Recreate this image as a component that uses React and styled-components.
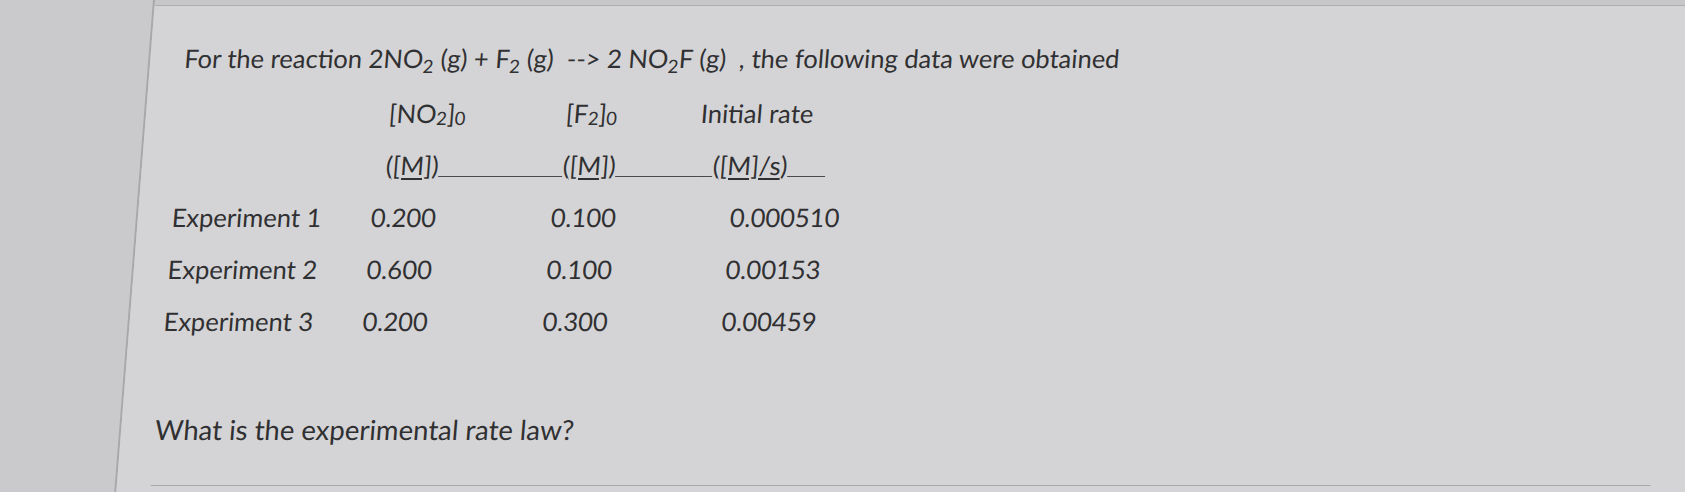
import React from 'react'
import styled, { createGlobalStyle } from 'styled-components'

const rows = [
	{ label: 'Experiment 1', no2: '0.200', f2: '0.100', rate: '0.000510' },
	{ label: 'Experiment 2', no2: '0.600', f2: '0.100', rate: '0.00153' },
	{ label: 'Experiment 3', no2: '0.200', f2: '0.300', rate: '0.00459' },
]

const App = () => {
	return (
		<>
			<GlobalStyle />
			<Page>
				<Gutter />
				<Panel>
					<Question>
						<Title>
							For the reaction 2NO<Sub>2</Sub> (g) + F<Sub>2</Sub> (g)&nbsp; --&gt; 2 NO<Sub>2</Sub>F (g)&nbsp; , the following data were obtained
						</Title>
						<Table>
							<Cell />
							<Cell indent={10}>[NO<Sub>2</Sub>]<Sub>0</Sub></Cell>
							<Cell indent={7}>[F<Sub>2</Sub>]<Sub>0</Sub></Cell>
							<Cell>Initial rate</Cell>

							<Cell />
							<Cell indent={11}>
								(<Unit>[M]</Unit>)<Rule />
							</Cell>
							<Cell>
								<Rule fixed={8} />(<Unit>[M]</Unit>)<Rule />
							</Cell>
							<Cell>
								<Rule fixed={16} />(<Unit>[M]/s</Unit>)<Rule fixed={38} />
							</Cell>

							{rows.map((row) => (
								<React.Fragment key={row.label}>
									<Cell>{row.label}</Cell>
									<Cell>{row.no2}</Cell>
									<Cell>{row.f2}</Cell>
									<Cell indent={37}>{row.rate}</Cell>
								</React.Fragment>
							))}
						</Table>
						<Prompt>What is the experimental rate law?</Prompt>
					</Question>
				</Panel>
			</Page>
		</>
	)
}

const GlobalStyle = createGlobalStyle`
	html, body {
		margin: 0;
		overflow: hidden;
		background: #d3d3d5;
	}
`

const Page = styled.div`
	display: flex;
	width: 1760px;
	height: 492px;
	background: #c7c7c9;
	transform: skewX(-4.5deg);
	transform-origin: 0 0;
	font-family: Lato, "Open Sans", sans-serif;
	font-size: 25.5px;
	color: #303032;
`

const Gutter = styled.div`
	width: 153px;
	flex-shrink: 0;
	background: #cacacc;
	border-right: 2px solid #a8a8aa;
`

const Panel = styled.div`
	flex: 1;
	margin-top: 5px;
	background: #d4d4d6;
	border-top: 1px solid #aeaeb0;
	padding: 26px 0 0 34px;
`

const Question = styled.div`
	width: 1500px;
	border-bottom: 1px solid #aaaaac;
	padding-bottom: 29px;
`

const Title = styled.div`
	line-height: 52px;
	white-space: nowrap;
`

const Sub = styled.span`
	font-size: 0.72em;
	position: relative;
	top: 0.28em;
`

const Table = styled.div`
	display: grid;
	grid-template-columns: 199px 180px 142px 160px;
	grid-auto-rows: 52px;
`

const Cell = styled.div`
	display: flex;
	align-items: center;
	padding-left: ${(p) => p.indent || 0}px;
	white-space: pre;
`

const Unit = styled.span`
	text-decoration: underline;
	text-decoration-thickness: 1.5px;
	text-underline-offset: 3px;
`

const Rule = styled.span`
	${(p) => (p.fixed ? `width: ${p.fixed}px;` : 'flex: 1;')}
	align-self: center;
	height: 0;
	margin-top: 23px;
	border-bottom: 1.5px solid #4a4a4c;
`

const Prompt = styled.div`
	margin-top: 57px;
	font-size: 27.5px;
	line-height: 52px;
`

export default App
